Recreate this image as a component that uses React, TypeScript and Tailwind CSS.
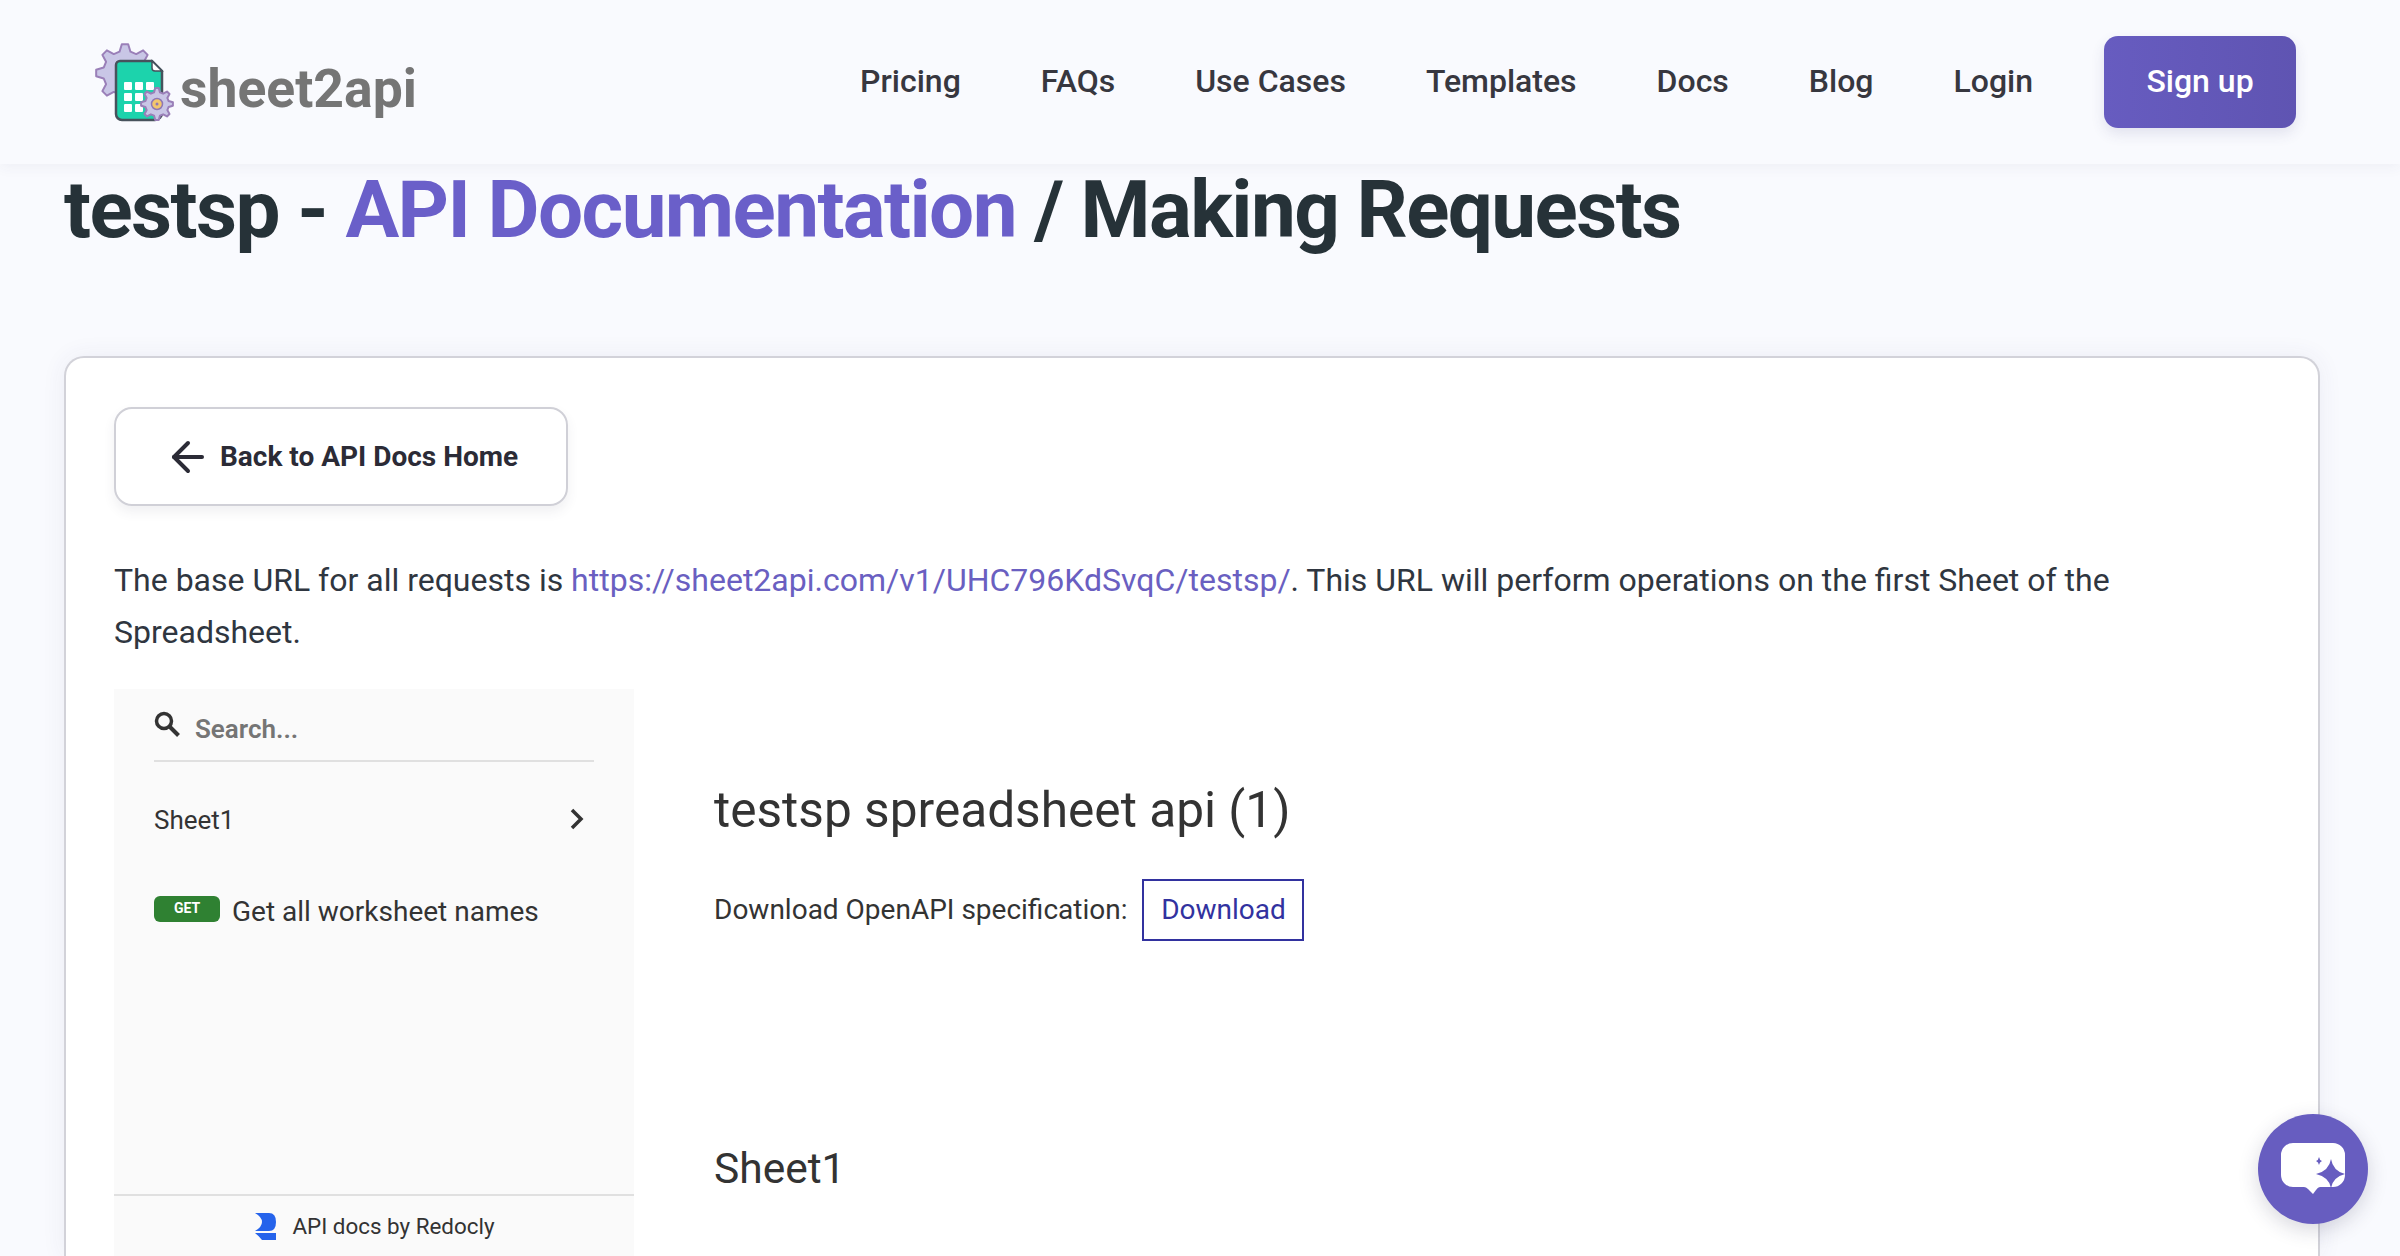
import React from 'react';
import { ArrowLeft } from 'lucide-react';

const navItems = ['Pricing', 'FAQs', 'Use Cases', 'Templates', 'Docs', 'Blog', 'Login'];

// outline of a cog, points worked out from the tooth count
function gearPath(cx: number, cy: number, outer: number, inner: number, teeth: number) {
  const pts: string[] = [];
  const step = (Math.PI * 2) / teeth;
  for (let i = 0; i < teeth; i++) {
    const a = i * step - Math.PI / 2;
    const corners: [number, number][] = [
      [a - step * 0.32, inner],
      [a - step * 0.14, outer],
      [a + step * 0.14, outer],
      [a + step * 0.32, inner],
    ];
    corners.forEach(([t, r]) => {
      pts.push(`${(cx + Math.cos(t) * r).toFixed(2)} ${(cy + Math.sin(t) * r).toFixed(2)}`);
    });
  }
  return `M${pts.join('L')}Z`;
}

function Logo() {
  const cells = [0, 1, 2];
  return (
    <svg width="90" height="90" viewBox="0 0 90 90" className="mt-[6px] shrink-0">
      <path d={gearPath(35, 33, 29, 22, 8)} fill="#c9c6e6" stroke="#9a7fb8" strokeWidth="2" strokeLinejoin="round" />
      <circle cx="35" cy="33" r="9" fill="#a99cc9" />
      <path d="M30 21H62L72 31V73A7 7 0 0 1 65 80H32A6 6 0 0 1 26 74V25A4 4 0 0 1 30 21Z" fill="#1cd3ac" stroke="#47525c" strokeWidth="2.5" />
      <path d="M62 21L72 31H65A3 3 0 0 1 62 28Z" fill="#ffffff" stroke="#47525c" strokeWidth="1.5" />
      {cells.map((row) =>
        cells.map((col) => (
          <rect key={`${row}-${col}`} x={34 + col * 11} y={42 + row * 11} width="8" height="8" rx="1" fill="#ffffff" />
        ))
      )}
      <path d={gearPath(67, 64, 16, 12, 8)} fill="#c9c6e6" stroke="#9a7fb8" strokeWidth="2" strokeLinejoin="round" />
      <circle cx="67" cy="64" r="5.5" fill="#f2c66d" stroke="#8f78b5" strokeWidth="1.5" />
      <circle cx="67" cy="64" r="1.5" fill="#8f78b5" />
    </svg>
  );
}

function RedoclyIcon() {
  return (
    <svg width="22" height="27" viewBox="0 0 22 27" className="shrink-0">
      <path d="M0 0H14Q21 0 21 9Q21 18 14 18H0Q7 14 7 9Q7 4 0 0Z" fill="#2563eb" />
      <path d="M0 20H21V27H7Q4 23 0 20Z" fill="#2563eb" />
    </svg>
  );
}

function ChatIcon() {
  return (
    <svg width="64" height="52" viewBox="0 0 64 52">
      <path d="M12 0H52A12 12 0 0 1 64 12V32A12 12 0 0 1 52 44H39Q37 44 35 47L32 51L27 46Q25 44 23 44H12A12 12 0 0 1 0 32V12A12 12 0 0 1 12 0Z" fill="#ffffff" />
      <path d="M50 16Q52 28 64 31Q52 34 50 45Q48 34 35 31Q48 28 50 16Z" fill="#675dc0" />
      <path d="M38 14Q38.5 17 41 18Q38.5 19 38 22Q37.5 19 35 18Q37.5 17 38 14Z" fill="#675dc0" />
    </svg>
  );
}

export default function App() {
  return (
    <div className="relative h-screen overflow-hidden bg-[#f9fafe] font-[Roboto,sans-serif] text-[#263238]">
      <header className="relative z-10 flex h-[164px] items-center justify-between bg-[#f9fafe] pl-[90px] pr-[104px] shadow-[0_4px_12px_rgba(60,60,90,0.05)]">
        <div className="flex items-center">
          <Logo />
          <span className="mt-[14px] text-[53.5px] font-bold leading-none text-[#757575]">sheet2api</span>
        </div>
        <nav className="flex items-center gap-[80px] text-[32px] font-medium text-[#37373f]">
          {navItems.map((item) => (
            <a key={item} className="pb-[3px]">{item}</a>
          ))}
          <a className="-ml-[9px] flex h-[92px] w-[192px] items-center justify-center rounded-[14px] bg-gradient-to-r from-[#675cc0] to-[#5f54b2] pb-[3px] text-white shadow-[0_6px_14px_rgba(60,60,120,0.12)]">
            Sign up
          </a>
        </nav>
      </header>

      <main className="pl-[64px] pr-[80px]">
        <h1 className="text-[80px] font-bold leading-[92px] tracking-[-1.6px]">
          testsp - <span className="text-[#6a5fc9]">API Documentation</span> / Making Requests
        </h1>

        <section className="mt-[100px] rounded-t-[20px] border-2 border-b-0 border-[#d2d2d9] bg-white px-[48px] pt-[49px] shadow-[0_0_24px_rgba(60,60,110,0.07)]">
          <a className="flex h-[99px] w-[454px] items-center gap-[8px] rounded-[18px] border-2 border-[#d0d0d7] pl-[48px] text-[28px] font-bold text-[#2b2b36] shadow-[0_6px_12px_rgba(60,60,90,0.08)]">
            <ArrowLeft size={48} strokeWidth={2} />
            Back to API Docs Home
          </a>

          <p className="mt-[48px] text-[32px] leading-[52px] text-[#2f3640]">
            The base URL for all requests is{' '}
            <a className="text-[#6a5fc1]">https://sheet2api.com/v1/UHC796KdSvqC/testsp/</a>. This URL will perform operations on the first Sheet of the Spreadsheet.
          </p>

          <div className="mt-[31px] flex">
            <aside className="flex h-[568px] w-[520px] shrink-0 flex-col bg-[#fafafa] text-[#333333]">
              <div className="mx-[40px] flex h-[73px] items-center gap-[15px] border-b-2 border-[#e0e0e0] pt-[10px]">
                <svg width="26" height="26" viewBox="0 0 26 26" className="-mt-[12px] shrink-0">
                  <circle cx="10" cy="10" r="7.5" fill="none" stroke="#333333" strokeWidth="3.5" />
                  <path d="M15.5 15.5L24.5 24.5" stroke="#333333" strokeWidth="4" />
                </svg>
                <span className="text-[26px] font-semibold text-[#757575]">Search...</span>
              </div>
              <div className="mx-[40px] mt-[26px] flex h-[64px] items-center justify-between pr-[10px] text-[26px]">
                <span>Sheet1</span>
                <svg width="14" height="22" viewBox="0 0 14 22" className="-mt-[2px]">
                  <path d="M2 2L11 11L2 20" fill="none" stroke="#333333" strokeWidth="3.5" />
                </svg>
              </div>
              <div className="mx-[40px] mt-[39px] flex items-center gap-[12px] text-[28px]">
                <span className="-mt-[6px] flex h-[26px] w-[66px] items-center justify-center rounded-[6px] bg-[#2f8132] pb-[2px] text-[14px] font-bold text-white">GET</span>
                <span>Get all worksheet names</span>
              </div>
              <div className="mt-auto flex h-[63px] items-center justify-center gap-[15px] border-t-2 border-[#e0e0e0] pl-[2px] text-[22.4px]">
                <RedoclyIcon />
                <span>API docs by Redocly</span>
              </div>
            </aside>

            <div className="pl-[80px] text-[#333333]">
              <h2 className="mt-[87px] text-[49.6px] leading-[68px]">testsp spreadsheet api (1)</h2>
              <div className="mt-[35px] flex items-center gap-[15px] text-[28px]">
                <span>Download OpenAPI specification:</span>
                <a className="flex h-[62px] w-[162px] items-center justify-center border-2 border-[#32329f] text-[#32329f]">Download</a>
              </div>
              <h3 className="mt-[198px] text-[42.5px] leading-[60px]">Sheet1</h3>
            </div>
          </div>
        </section>
      </main>

      <button className="absolute bottom-[32px] right-[32px] z-20 flex h-[110px] w-[110px] items-center justify-center rounded-full bg-[#675dc0] shadow-[0_6px_20px_rgba(40,40,70,0.18)]">
        <ChatIcon />
      </button>
    </div>
  );
}
